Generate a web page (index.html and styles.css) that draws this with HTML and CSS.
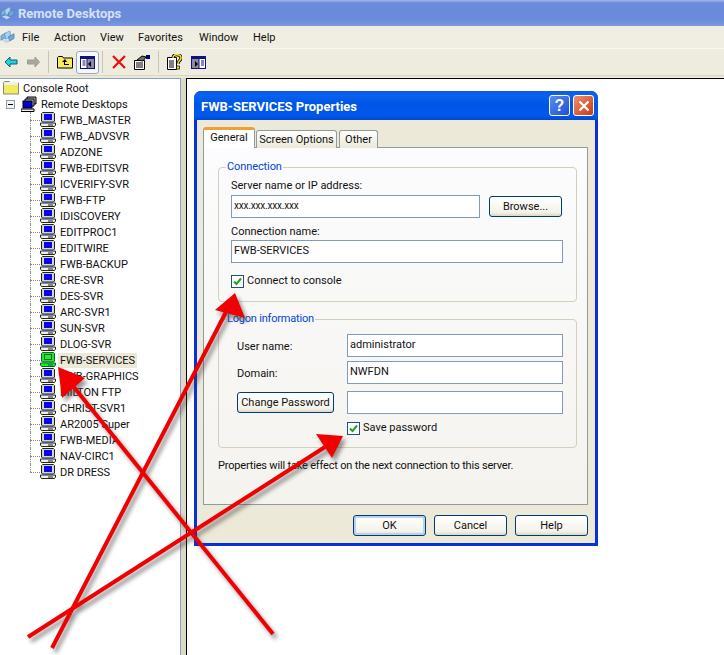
FILE: index.html
```html
<!DOCTYPE html>
<html lang="en">
<head>
<meta charset="utf-8">
<title>Remote Desktops</title>
<link rel="stylesheet" href="styles.css">
</head>
<body>
<svg class="defs" width="0" height="0">
  <defs>
    <symbol id="pc" viewBox="0 0 16 16">
      <path d="M2.500 .5h11l1 1v7.500l-1 1h-11l-1-1V1.500z" fill="#d4d4d4" stroke="#222"/>
      <rect x="4" y="2" width="8" height="6" fill="#0808e0"/>
      <path d="M.5 11h15v2l-1 1.500H1.500l-1-1.500z" fill="#f0f0f0" stroke="#222"/>
      <path d="M8 13h5" stroke="#222"/>
    </symbol>
    <symbol id="pc-on" viewBox="0 0 16 16">
      <path d="M2.500 .5h11l1 1v7.500l-1 1h-11l-1-1V1.500z" fill="#30e030" stroke="#063"/>
      <rect x="4.500" y="2.500" width="7" height="5" fill="#20f020" stroke="#063"/>
      <path d="M.5 11h15v2l-1 1.500H1.500l-1-1.500z" fill="#20f020" stroke="#063"/>
      <path d="M8 13h5" stroke="#063"/>
    </symbol>
    <symbol id="mmc" viewBox="0 0 16 16">
      <path d="M1 6l5-3v5l-5 3z" fill="#7fb4e6" stroke="#4c7ca8" stroke-width=".7"/>
      <path d="M5 4l5-3 1 1v5l-5 3z" fill="#a9d3f2" stroke="#5b8fbd" stroke-width=".7"/>
      <path d="M9 7l6-3v5l-5 3z" fill="#6fa8dc" stroke="#4c7ca8" stroke-width=".7"/>
      <path d="M2 11l5 3 4-2-5-2z" fill="#c6d6e6"/>
    </symbol>
  </defs>
</svg>
<div class="app">
  <header class="titlebar">
    <svg class="title-icon"><use href="#mmc"/></svg>
    <span class="title-text">Remote Desktops</span>
  </header>
  <nav class="menubar">
    <svg class="title-icon"><use href="#mmc"/></svg>
    <span class="menu m-file">File</span>
    <span class="menu m-action">Action</span>
    <span class="menu m-view">View</span>
    <span class="menu m-fav">Favorites</span>
    <span class="menu m-window">Window</span>
    <span class="menu">Help</span>
  </nav>
  <div class="toolbar">
    <svg class="tool tool-back" width="14" height="12" viewBox="0 0 14 12"><path d="M1 6l5-5v3h7v4H6v3z" fill="#25d0e0" stroke="#0a5f70"/></svg>
    <svg class="tool tool-fwd" width="13" height="12" viewBox="0 0 13 12"><path d="M12.500 6L8 1v3H.5v4H8v3z" fill="#a8a8a0" stroke="#9c9c92"/></svg>
    <i class="sep sep-a"></i>
    <svg class="tool tool-up" width="16" height="14" viewBox="0 0 16 14"><path d="M.5 13V2.500l1-1h4l1 1.500h9v10z" fill="#f6ee60" stroke="#000"/><path d="M8 4L5 7h2v3h5V9H8V7h2z" fill="#000"/></svg>
    <span class="tool-active">
      <svg width="15" height="13" viewBox="0 0 15 13"><rect x=".5" y=".5" width="14" height="12" fill="#fff" stroke="#101080"/><rect x="1" y="1" width="13" height="2" fill="#101080"/><rect x="7" y="3" width="7" height="9" fill="#8c8c9c"/><path d="M7 3v9" stroke="#101080"/><path d="M11 5v6L8 8z" fill="#000"/><path d="M2.500 5h3M2.500 7h3M2.500 9h3" stroke="#101080"/></svg>
    </span>
    <i class="sep sep-b"></i>
    <svg class="tool tool-x" width="14" height="14" viewBox="0 0 14 14"><path d="M1 1l12 12M13 1L1 13" stroke="#e81010" stroke-width="2.200"/></svg>
    <svg class="tool tool-prop" width="16" height="15" viewBox="0 0 16 15"><path d="M.5 5.500h10v9H.5z" fill="#fff" stroke="#000"/><path d="M2 8h7M2 10h7M2 12h7" stroke="#000"/><path d="M3 5l5-4 4 1-3 4z" fill="#707070" stroke="#000"/><rect x="12" y="0" width="4" height="4" fill="#000080"/></svg>
    <i class="sep sep-c"></i>
    <svg class="tool tool-help" width="15" height="16" viewBox="0 0 15 16"><path d="M.5 3.500h9v12h-9z" fill="#fff" stroke="#000"/><path d="M2 7h5M2 9h5M2 11h5M2 13h5" stroke="#000"/><path d="M6 4c0-5 8-4 8 0 0 3-3 2-3 6" fill="none" stroke="#000" stroke-width="3.200"/><path d="M6 4c0-5 8-4 8 0 0 3-3 2-3 6" fill="none" stroke="#f0e020" stroke-width="1.600"/><rect x="9.500" y="12" width="3" height="3" fill="#f0e020" stroke="#000" stroke-width=".7"/></svg>
    <svg class="tool tool-panel" width="15" height="13" viewBox="0 0 15 13"><rect x=".5" y=".5" width="14" height="12" fill="#fff" stroke="#101080"/><rect x="1" y="1" width="13" height="2" fill="#101080"/><rect x="1" y="3" width="7" height="9" fill="#8c8c9c"/><path d="M8 3v9" stroke="#101080"/><path d="M4 5v6l3-3z" fill="#000"/><path d="M10 5h3M10 7h3M10 9h3" stroke="#101080"/></svg>
  </div>
  <main class="workspace">
    <aside class="tree">
      <div class="node root-node">
        <svg class="folder" width="16" height="14" viewBox="0 0 16 14"><path d="M.5 13V2l1-1.500h5l1 1.500h8v11z" fill="#f4ec60" stroke="#8a8a70"/><path d="M1 1h14v3H1z" fill="#f0efe8"/></svg>
        <span>Console Root</span>
      </div>
      <div class="node rd-node">
        <span class="collapse"></span>
        <svg class="rd-icon" width="16" height="16" viewBox="0 0 16 16"><path d="M6 1h9v7H6z" fill="#aaa" stroke="#000"/><path d="M4 3h9v7H4z" fill="#bbb" stroke="#000"/><rect x="2" y="5" width="9" height="7" fill="#0000d0" stroke="#000"/><path d="M0 13h13v2.500H0z" fill="#eee" stroke="#000"/></svg>
        <span>Remote Desktops</span>
      </div>
      <ul class="servers">
        <li><svg class="pc"><use href="#pc"/></svg><span class="label">FWB_MASTER</span></li>
        <li><svg class="pc"><use href="#pc"/></svg><span class="label">FWB_ADVSVR</span></li>
        <li><svg class="pc"><use href="#pc"/></svg><span class="label">ADZONE</span></li>
        <li><svg class="pc"><use href="#pc"/></svg><span class="label">FWB-EDITSVR</span></li>
        <li><svg class="pc"><use href="#pc"/></svg><span class="label">ICVERIFY-SVR</span></li>
        <li><svg class="pc"><use href="#pc"/></svg><span class="label">FWB-FTP</span></li>
        <li><svg class="pc"><use href="#pc"/></svg><span class="label">IDISCOVERY</span></li>
        <li><svg class="pc"><use href="#pc"/></svg><span class="label">EDITPROC1</span></li>
        <li><svg class="pc"><use href="#pc"/></svg><span class="label">EDITWIRE</span></li>
        <li><svg class="pc"><use href="#pc"/></svg><span class="label">FWB-BACKUP</span></li>
        <li><svg class="pc"><use href="#pc"/></svg><span class="label">CRE-SVR</span></li>
        <li><svg class="pc"><use href="#pc"/></svg><span class="label">DES-SVR</span></li>
        <li><svg class="pc"><use href="#pc"/></svg><span class="label">ARC-SVR1</span></li>
        <li><svg class="pc"><use href="#pc"/></svg><span class="label">SUN-SVR</span></li>
        <li><svg class="pc"><use href="#pc"/></svg><span class="label">DLOG-SVR</span></li>
        <li><svg class="pc"><use href="#pc-on"/></svg><span class="label selected">FWB-SERVICES</span></li>
        <li><svg class="pc"><use href="#pc"/></svg><span class="label">FWB-GRAPHICS</span></li>
        <li><svg class="pc"><use href="#pc"/></svg><span class="label">MILTON FTP</span></li>
        <li><svg class="pc"><use href="#pc"/></svg><span class="label">CHRIST-SVR1</span></li>
        <li><svg class="pc"><use href="#pc"/></svg><span class="label">AR2005 Super</span></li>
        <li><svg class="pc"><use href="#pc"/></svg><span class="label">FWB-MEDIA</span></li>
        <li><svg class="pc"><use href="#pc"/></svg><span class="label">NAV-CIRC1</span></li>
        <li><svg class="pc"><use href="#pc"/></svg><span class="label">DR DRESS</span></li>
      </ul>
    </aside>
    <div class="splitter"></div>
    <section class="detail"></section>
  </main>

  <div class="dialog">
    <div class="dialog-title">
      <span class="dialog-title-text">FWB-SERVICES Properties</span>
      <span class="cap-btn cap-help">?</span>
      <span class="cap-btn cap-close"><svg width="12" height="12" viewBox="0 0 12 12"><path d="M1.500 1.500l9 9M10.500 1.500l-9 9" stroke="#fff" stroke-width="2.200"/></svg></span>
    </div>
    <div class="dialog-body">
      <div class="tabs">
        <span class="tab tab-active">General</span>
        <span class="tab tab-screen">Screen Options</span>
        <span class="tab tab-other">Other</span>
      </div>
      <div class="panel">
        <fieldset class="group group-conn">
          <legend>Connection</legend>
          <div class="field-label">Server name or IP address:</div>
          <div class="server-row">
            <div class="input input-server small-text">xxx.xxx.xxx.xxx</div>
            <button class="btn btn-browse" type="button">Browse...</button>
          </div>
          <div class="field-label second">Connection name:</div>
          <div class="input input-conn">FWB-SERVICES</div>
          <label class="check check-conn"><span class="box"><svg width="11" height="11" viewBox="0 0 11 11"><path d="M2 5.500l2.500 2.500L9 2.500" fill="none" stroke="#21a121" stroke-width="2"/></svg></span>Connect to console</label>
        </fieldset>
        <fieldset class="group group-logon">
          <legend>Logon information</legend>
          <div class="logon-grid">
            <span class="row-label">User name:</span><div class="input">administrator</div>
            <span class="row-label">Domain:</span><div class="input">NWFDN</div>
            <button class="btn btn-change" type="button">Change Password</button><div class="input input-pass"></div>
            <span></span>
            <label class="check"><span class="box"><svg width="11" height="11" viewBox="0 0 11 11"><path d="M2 5.500l2.500 2.500L9 2.500" fill="none" stroke="#21a121" stroke-width="2"/></svg></span>Save password</label>
          </div>
        </fieldset>
        <p class="note">Properties will take effect on the next connection to this server.</p>
      </div>
      <div class="actions">
        <button class="btn btn-action btn-default" type="button">OK</button>
        <button class="btn btn-action" type="button">Cancel</button>
        <button class="btn btn-action" type="button">Help</button>
      </div>
    </div>
  </div>

  <svg class="arrows" width="724" height="655" viewBox="0 0 724 655">
    <g stroke="#f00000" stroke-width="4" fill="#f00000">
      <line x1="52" y1="648" x2="226" y2="312"/>
      <polygon points="235,293 245,318 215,310" stroke="none"/>
      <line x1="28" y1="637" x2="325" y2="447"/>
      <polygon points="343,436 332,458 316,434" stroke="none"/>
      <line x1="273" y1="634" x2="73" y2="386"/>
      <polygon points="58,367 85,378 62,398" stroke="none"/>
    </g>
  </svg>
</div>
</body>
</html>
```

FILE: styles.css
```css
* { box-sizing: border-box; }
html, body { margin: 0; padding: 0; background: #fff; }
body { font-family: Roboto, "Liberation Sans", sans-serif; font-size: 11px; color: #111; }
.defs { position: absolute; }

.app { position: relative; width: 724px; height: 655px; overflow: hidden; display: flex; flex-direction: column; }

.titlebar { flex: 0 0 26px; display: flex; align-items: center; gap: 3px; background: linear-gradient(#a3b6e6 0, #6b8ada 12%, #6a8bdc 75%, #7c98e0 100%); }
.title-icon { width: 15px; height: 15px; flex: none; }
.title-text { font-weight: 700; font-size: 13px; color: #d6e0f4; }

.menubar { flex: 0 0 22px; display: flex; align-items: center; background: #f0eee2; }
.menu { line-height: 20px; padding-top: 2px; }
.menubar .title-icon { margin-right: 7px; }
.m-file { width: 32px; }
.m-action { width: 46px; }
.m-view { width: 38px; }
.m-fav { width: 61px; }
.m-window { width: 54px; }

.toolbar { flex: 0 0 28px; display: flex; align-items: center; padding-left: 4px; background: #eeecdf; border-top: 1px solid #f8f7f0; border-bottom: 1px solid #d8d5c5; }
.tool { flex: none; display: block; }
.tool-back { margin-right: 9px; }
.sep { flex: none; width: 1px; height: 22px; background: #c8c5b4; }
.sep-a { margin: 0 8px 0 8px; }
.tool-active { flex: none; width: 23px; height: 23px; margin-left: 3px; display: flex; align-items: center; justify-content: center; background: #f6f7fb; border: 1px solid #99a8c8; border-radius: 3px; }
.sep-b { margin: 0 9px 0 3px; }
.tool-x { margin-right: 8px; }
.sep-c { margin: 0 8px 0 8px; }
.tool-help { margin-right: 9px; }

.workspace { flex: 1; min-height: 0; display: flex; background: #ece9d8; padding-top: 2px; }
.tree { flex: 0 0 181px; background: #fff; border-top: 1px solid #8aa0cc; border-right: 1px solid #8aa0cc; padding-top: 1px; overflow: hidden; }
.splitter { flex: 0 0 5px; background: #dcd9c8; }
.detail { flex: 1; background: #fff; border-left: 1px solid #000; border-top: 1px solid #000; }

.node { height: 16px; display: flex; align-items: center; white-space: nowrap; }
.root-node { padding-left: 3px; gap: 4px; }
.rd-node { padding-left: 6px; }
.collapse { position: relative; flex: none; width: 9px; height: 9px; border: 1px solid #8a9ab0; background: #f4f4ee; margin-right: 6px; }
.collapse::after { content: ""; position: absolute; left: 1px; top: 3px; width: 5px; height: 1px; background: #000; }
.rd-icon { margin-right: 4px; }

.servers { list-style: none; margin: 0; padding: 0 0 0 30px; }
.servers li { position: relative; height: 16px; display: flex; align-items: center; padding-left: 10px; white-space: nowrap; }
.servers li::before { content: ""; position: absolute; left: 0; top: 0; bottom: 0; border-left: 1px dotted #888; }
.servers li:last-child::before { bottom: 8px; }
.servers li::after { content: ""; position: absolute; left: 0; top: 8px; width: 10px; border-top: 1px dotted #888; }
.pc { flex: none; width: 16px; height: 16px; margin-right: 2px; }
.label { padding: 0 2px; line-height: 15px; }
.selected { background: #ece9d8; }

.dialog { position: absolute; left: 194px; top: 91px; width: 404px; height: 455px; display: flex; flex-direction: column; background: #0831d9; border-radius: 7px 7px 0 0; }
.dialog-title { flex: 0 0 29px; display: flex; align-items: center; padding: 0 4px 0 7px; gap: 3px; border-radius: 7px 7px 0 0; background: linear-gradient(#0a5ae8 0, #0a62f0 12%, #0055e5 45%, #0058ec 85%, #0048d0 100%); }
.dialog-title-text { flex: 1; font-weight: 700; font-size: 13px; color: #fff; padding-top: 2px; }
.cap-btn { flex: none; width: 21px; height: 21px; display: flex; align-items: center; justify-content: center; border: 1px solid #fff; border-radius: 3px; color: #fff; font-family: "Liberation Sans", sans-serif; font-weight: 700; font-size: 16px; }
.cap-help { background: linear-gradient(135deg, #5a8cf0, #1c50d8); }
.cap-close { background: linear-gradient(135deg, #ee9070, #c83a10); }

.dialog-body { flex: 1; margin: 0 3px 3px; background: #ece9d8; padding: 7px 7px 0 6px; display: flex; flex-direction: column; }
.tabs { display: flex; align-items: flex-end; height: 21px; margin-bottom: -1px; position: relative; z-index: 1; }
.tab { height: 18px; line-height: 17px; margin-left: 1px; text-align: center; white-space: nowrap; background: linear-gradient(#fff, #ece9d8); border: 1px solid #919b9c; border-bottom: 0; border-radius: 3px 3px 0 0; }
.tab-active { width: 52px; height: 21px; line-height: 16px; margin-left: 0; background: #fff; border-top: 3px solid #f0a030; }
.tab-screen { width: 81px; }
.tab-other { width: 39px; margin-left: 2px; }

.panel { height: 358px; flex: none; padding: 12px 9px 0 14px; border: 1px solid #919b9c; background: linear-gradient(#fcfcfe, #f4f3ee); }

.group { margin: 0; padding: 0 13px 0 12px; width: 359px; border: 1px solid #d0d0bf; border-radius: 4px; min-inline-size: 0; }
.group legend { padding: 0 1px; margin-left: -5px; color: #0046d5; line-height: 14px; letter-spacing: -0.100px; }
.group-logon legend { letter-spacing: -0.200px; }
.group-conn { height: 142px; }
.group-logon { height: 136px; margin-top: 10px; }
.field-label { line-height: 14px; margin-top: 5px; }
.field-label.second { margin-top: 7px; }
.server-row { display: flex; gap: 9px; align-items: center; margin-top: 2px; }
.input { height: 23px; line-height: 20px; padding: 0 4px 0 2px; background: #fff; border: 1px solid #7f9db9; }
.input-server { width: 249px; }
.small-text { font-size: 10px; letter-spacing: -0.200px; }
.btn { padding: 0; font: inherit; color: #111; background: linear-gradient(#fff, #f4f3ea 80%, #dcd8c6); border: 1px solid #003c74; border-radius: 3px; }
.btn-browse { width: 73px; height: 21px; }
.input-conn { width: 332px; margin-top: 1px; }
.check { display: flex; align-items: center; gap: 3px; line-height: 14px; }
.check-conn { margin-top: 11px; }
.box { flex: none; width: 13px; height: 13px; display: flex; align-items: center; justify-content: center; background: #fff; border: 1px solid #1c5180; }

.logon-grid { display: grid; grid-template-columns: 110px 216px; align-items: center; row-gap: 4px; padding: 0 0 0 6px; margin-top: 8px; }
.row-label { padding-top: 2px; }
.input-pass { margin-top: 3px; }
.btn-change { width: 97px; height: 21px; margin-top: 3px; }
.logon-grid .check { margin-top: 3px; }
.note { margin: 11px 0 0; line-height: 14px; letter-spacing: -0.180px; }

.actions { display: flex; justify-content: flex-end; gap: 8px; padding: 10px 0 0; }
.btn-action { width: 73px; height: 21px; }
.btn-default { border-color: #003c74; box-shadow: inset 0 0 0 2px #bcd0f0; }

.arrows { position: absolute; left: 0; top: 0; pointer-events: none; filter: drop-shadow(3px 4px 2px rgba(60,60,60,.55)); }
```
